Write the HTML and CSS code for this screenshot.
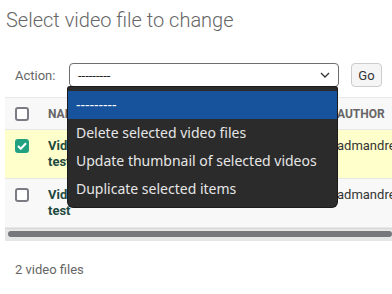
FILE: index.html
```html
<!DOCTYPE html>
<html lang="en">
<head>
  <meta charset="UTF-8">
  <title>Select video file to change</title>
  <link rel="stylesheet" href="styles.css">
</head>
<body>
  <div class="content">
    <h1>Select video file to change</h1>

    <div class="changelist">
      <div class="actions">
        <label class="action-label">Action:</label>
        <div class="select-wrap">
          <div class="select">
            <span>---------</span>
            <svg class="chevron" width="10" height="6" viewBox="0 0 10 6">
              <path d="M1 1l4 4 4-4" fill="none" stroke="#333" stroke-width="1.3"/>
            </svg>
          </div>
          <ul class="popup">
            <li class="selected">---------</li>
            <li>Delete selected video files</li>
            <li>Update thumbnail of selected videos</li>
            <li>Duplicate selected items</li>
          </ul>
        </div>
        <button class="btn-go">Go</button>
      </div>

      <div class="results">
        <table>
          <colgroup>
            <col class="col-check">
            <col class="col-name">
            <col class="col-author">
          </colgroup>
          <thead>
            <tr>
              <th class="check-cell"><span class="checkbox"></span></th>
              <th>Name</th>
              <th>Author</th>
            </tr>
          </thead>
          <tbody>
            <tr class="row-selected">
              <td class="check-cell">
                <span class="checkbox checked">
                  <svg width="10" height="8" viewBox="0 0 10 8">
                    <path d="M1 4l2.8 2.8L9 1.3" fill="none" stroke="#fff" stroke-width="2"/>
                  </svg>
                </span>
              </td>
              <td><a href="#">Video<br>test</a></td>
              <td>admandre</td>
            </tr>
            <tr class="row-alt">
              <td class="check-cell"><span class="checkbox"></span></td>
              <td><a href="#">Video<br>test</a></td>
              <td>admandre</td>
            </tr>
          </tbody>
        </table>
      </div>
      <div class="scrollbar"><div class="thumb"></div></div>

      <p class="paginator">2 video files</p>
    </div>
  </div>
</body>
</html>
```

FILE: styles.css
```css
body {
  margin: 0;
  font-family: Roboto, "Liberation Sans", sans-serif;
  font-size: 13px;
  color: #333;
  background: #fff;
  overflow: hidden;
}

h1 {
  margin: 8px 0 18px 6px;
  font-size: 20px;
  line-height: 24px;
  font-weight: 300;
  color: #666;
}

.changelist {
  margin-left: 5px;
}

.actions {
  display: flex;
  align-items: center;
  padding: 13px 10px 10px;
  border-bottom: 1px solid #e8e8e8;
}

.action-label {
  color: #666;
  width: 40px;
  margin-right: 14px;
}

.select-wrap {
  position: relative;
}

.select {
  box-sizing: border-box;
  width: 270px;
  height: 24px;
  padding: 0 6px 0 8px;
  display: flex;
  align-items: center;
  justify-content: space-between;
  border: 1px solid #6e6e6e;
  border-radius: 4px;
  color: #222;
  background: #fff;
}

.chevron {
  margin-right: 2px;
}

.popup {
  position: absolute;
  top: 24px;
  left: -1px;
  width: 269px;
  margin: 0;
  padding: 4px 0;
  list-style: none;
  background: #2b2b2b;
  border-radius: 2px 2px 5px 5px;
  box-shadow: 0 0 0 1px #1b1b1b;
  font-family: "Noto Sans", sans-serif;
  font-size: 14px;
  color: #e6e6e6;
  z-index: 10;
}

.popup li {
  height: 28px;
  line-height: 28px;
  padding-left: 8px;
  white-space: nowrap;
}

.popup li.selected {
  background: #17529c;
  color: #fff;
}

.btn-go {
  margin-left: 12px;
  width: 34px;
  height: 24px;
  padding: 0;
  border: 1px solid #ccc;
  border-radius: 4px;
  background: #f5f5f5;
  font-family: Roboto, sans-serif;
  font-size: 13px;
  color: #333;
}

.results {
  overflow: hidden;
}

table {
  border-collapse: collapse;
  table-layout: fixed;
  width: 522px;
}

.col-check { width: 33px; }
.col-name { width: 289px; }
.col-author { width: 200px; }

th, td {
  padding: 8px 10px;
  line-height: 16px;
  text-align: left;
  vertical-align: top;
  border-bottom: 1px solid #e8e8e8;
}

th {
  background: #f8f8f8;
  color: #666;
  font-size: 12px;
  font-weight: bold;
  text-transform: uppercase;
  padding-top: 8px;
  padding-bottom: 7px;
}

th.check-cell, td.check-cell {
  padding: 9px 9px 8px 10px;
}

td a {
  color: #1f4a3f;
  font-weight: bold;
  text-decoration: none;
}

.row-selected td {
  background: #ffc;
}

.row-alt td {
  background: #f8f8f8;
}

.checkbox {
  box-sizing: border-box;
  display: flex;
  align-items: center;
  justify-content: center;
  width: 14px;
  height: 14px;
  border: 2px solid #7b7b84;
  border-radius: 3px;
  background: #fff;
}

.checkbox.checked {
  border: none;
  background: #22a181;
}

.scrollbar {
  height: 13px;
  background: #e6e6e6;
  border-top: 1px solid #d8d8d8;
  box-sizing: border-box;
  padding: 2px 0 0 3px;
}

.thumb {
  height: 6px;
  border-radius: 3px;
  background: #76777b;
}

.paginator {
  margin: 0;
  padding: 21px 10px;
  line-height: 16px;
  color: #666;
}
```
